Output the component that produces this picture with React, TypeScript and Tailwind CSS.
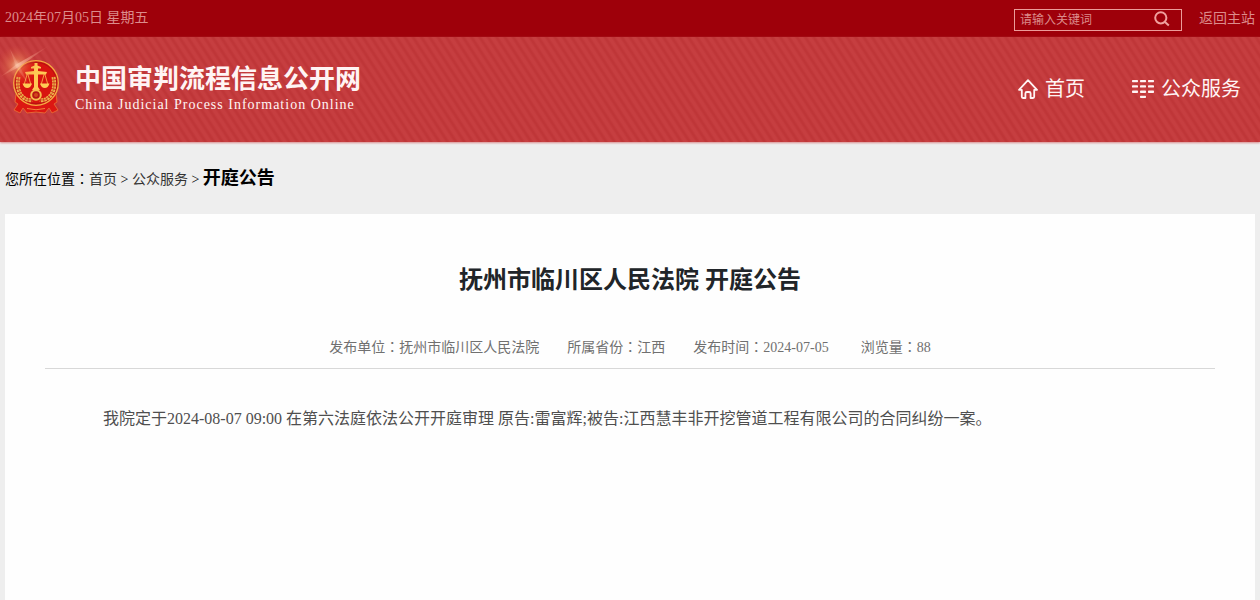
import type { ReactNode } from "react";

const metaItems = [
  { label: "发布单位", value: "抚州市临川区人民法院" },
  { label: "所属省份", value: "江西" },
  { label: "发布时间", value: "2024-07-05" },
  { label: "浏览量", value: "88" },
];

const CourtEmblem = () => (
  <svg viewBox="0 0 70 80" className="h-20 w-[70px] shrink-0" aria-hidden="true">
    <defs>
      <radialGradient id="flare">
        <stop offset="0" stopColor="#ffd9b0" stopOpacity="0.95" />
        <stop offset="0.3" stopColor="#f79a60" stopOpacity="0.6" />
        <stop offset="1" stopColor="#e0503c" stopOpacity="0" />
      </radialGradient>
      <linearGradient id="ray" x1="0" y1="1" x2="1" y2="0">
        <stop offset="0" stopColor="#ff9c80" stopOpacity="0.1" />
        <stop offset="0.4" stopColor="#ffd0b4" stopOpacity="0.6" />
        <stop offset="1" stopColor="#ff9c80" stopOpacity="0" />
      </linearGradient>
    </defs>
    <g transform="translate(0 2)">
      {/* ribbon */}
      <path
        d="M16 55 L15 63 L18 65 L14 71 L20 74 L23 69 L27 74 Q36 72 45 74 L49 69 L52 74 L58 71 L54 65 L57 63 L56 55 Z"
        fill="#dc1712"
        stroke="#ea6a32"
        strokeWidth="0.9"
      />
      <path d="M27 69.5 Q36 72 45 69.5" fill="none" stroke="#f4863b" strokeWidth="1" />
      {/* disc */}
      <circle cx="36" cy="44" r="22.3" fill="#cf1713" stroke="#f5ad43" strokeWidth="1.3" />
      <circle cx="36" cy="44" r="20.6" fill="#d8140f" stroke="#a91112" strokeWidth="0.7" />
      {/* wheat */}
      <path
        d="M18.5 38 Q16 52 23 58 Q27 62 32 61 M53.5 38 Q56 52 49 58 Q45 62 40 61"
        fill="none"
        stroke="#eeb14c"
        strokeWidth="4"
        strokeDasharray="2.4 0.7"
      />
      <path
        d="M18.5 38 Q16 52 23 58 Q27 62 32 61 M53.5 38 Q56 52 49 58 Q45 62 40 61"
        fill="none"
        stroke="#bd4b20"
        strokeWidth="0.7"
      />
      {/* ornamental column and scales */}
      <path
        d="M34.5 24 H37.5 V26.5 L41 28 V29.5 H38 V32 L47 33 L46 35.5 H38 V48 L40 51 H32 L34 48 V35.5 H26 L25 33 L34 32 V29.5 H31 V28 L34.5 26.5 Z"
        fill="#ffc954"
      />
      <path
        d="M27.5 34 L24 46 M27.5 34 L31 46 M44.5 34 L41 46 M44.5 34 L48 46"
        fill="none"
        stroke="#ffc04e"
        strokeWidth="0.8"
      />
      <path d="M22.5 44.5 H32 Q30.5 49 27.2 49 Q24 49 22.5 44.5 M40 44.5 H49.5 Q48 49 44.8 49 Q41.5 49 40 44.5" fill="#ffcb54" />
      <circle cx="36" cy="56" r="4.8" fill="#b81612" stroke="#f6bd4d" strokeWidth="2" />
      <circle cx="36" cy="56" r="2" fill="#d2481b" />
    </g>
    {/* light flare */}
    <circle cx="17" cy="28" r="20" fill="url(#flare)" opacity="0.8" />
    <path d="M0 40 L17 27 L50 8 L19 30 Z" fill="url(#ray)" />
    <path d="M10 12 L19 28 L29 48 L16 30 Z" fill="url(#ray)" opacity="0.4" />
  </svg>
);

const SearchIcon = () => (
  <svg viewBox="0 0 16 16" className="size-4" fill="none" stroke="#f0a09e" strokeWidth="2">
    <circle cx="6.8" cy="6.8" r="5.6" />
    <path d="M11 11 L14.8 14.5" />
  </svg>
);

const HomeIcon = () => (
  <svg
    viewBox="0 0 20 20"
    className="size-5"
    fill="none"
    stroke="currentColor"
    strokeWidth="1.8"
    strokeLinejoin="round"
    strokeLinecap="round"
    aria-hidden="true"
  >
    <path d="M3.8 10.8 H1 L10 1.2 L19 10.8 H16.2 V17.8 Q16.2 19 15 19 H12.6 V14.5 Q12.6 13 11.2 13 H8.8 Q7.4 13 7.4 14.5 V19 H5 Q3.8 19 3.8 17.8 Z" />
  </svg>
);

const ServiceIcon = () => (
  <svg viewBox="0 0 22 18" className="h-[18px] w-[22px]" fill="currentColor" aria-hidden="true">
    {[0, 5.3, 10.6].map((y) =>
      [0, 8, 16].map((x) => <rect key={`${x}-${y}`} x={x} y={y} width="6" height="2.3" rx="0.7" />),
    )}
    <rect x="8" y="15.7" width="6" height="2.3" rx="0.7" />
  </svg>
);

const Colon = () => <span className="font-['Noto_Sans_CJK_JP',sans-serif]">：</span>;

const NavLink = ({ icon, children }: { icon: ReactNode; children: ReactNode }) => (
  <a href="#" className="flex items-center gap-[7px] text-xl leading-7 text-[#fff4f4]">
    {icon}
    {children}
  </a>
);

const TopBar = () => (
  <div className="flex h-[37px] items-center justify-between bg-[#9e000a] px-[5px] text-sm text-[#dc8c8c]">
    <span className="pb-px">2024年07月05日 星期五</span>
    <div className="flex items-center gap-[17px]">
      <form
        className="mt-[3px] flex h-[22px] w-[168px] items-center border border-[#ec9c9a] pr-[11px] pl-[5px]"
        onSubmit={(event) => event.preventDefault()}
      >
        <input
          type="text"
          aria-label="请输入关键词"
          placeholder="请输入关键词"
          className="h-5 min-w-0 flex-1 text-xs text-[#f3a9a7] outline-none placeholder:text-[#dc8c8c]"
        />
        <button type="submit" aria-label="搜索" className="pb-[3px]">
          <SearchIcon />
        </button>
      </form>
      <a href="#">返回主站</a>
    </div>
  </div>
);

const Header = () => (
  <header className="flex h-[105px] items-start justify-between bg-[#c33a3c] bg-[repeating-linear-gradient(57deg,#c63e40_0px,#c63e40_2px,#bf3638_4px,#bf3638_5px,#c63e40_7px)] pr-[19px] shadow-[0_1px_2px_#d98a8b]">
    <div className="flex">
      <CourtEmblem />
      <div className="pt-[26px] pl-[5px] text-[#fff4f4]">
        <h1 className="text-[26px] leading-[34px] font-bold">中国审判流程信息公开网</h1>
        <p className="text-sm leading-4 tracking-[1px]">China Judicial Process Information Online</p>
      </div>
    </div>
    <nav className="flex gap-[47px] pt-[38px]">
      <NavLink icon={<HomeIcon />}>首页</NavLink>
      <NavLink icon={<ServiceIcon />}>公众服务</NavLink>
    </nav>
  </header>
);

export default function App() {
  return (
    <div className="flex min-h-screen flex-col bg-[#eeeeee] font-['Liberation_Serif','Noto_Sans_CJK_SC',serif]">
      <TopBar />
      <Header />
      <div className="flex flex-1 flex-col px-[5px]">
        <nav className="flex h-[72px] items-center pt-0.5 text-sm text-black">
          <p className="leading-7">
            您所在位置
            <Colon />
            <a href="#" className="text-[#333333]">首页</a>
            {" > "}
            <a href="#" className="text-[#333333]">公众服务</a>
            {" > "}
            <strong className="text-lg leading-7">开庭公告</strong>
          </p>
        </nav>
        <main className="flex-1 bg-[#fefefe] px-10 pt-12">
          <h2 className="text-center text-2xl leading-9 font-bold text-[#212529]">
            抚州市临川区人民法院 开庭公告
          </h2>
          <div className="mt-[38px] flex justify-center gap-7 border-b border-[#d8d8d8] pb-2.5 text-sm leading-5 text-[#707070] *:last:pl-1">
            {metaItems.map((item) => (
              <span key={item.label}>
                {item.label}
                <Colon />
                {item.value}
              </span>
            ))}
          </div>
          <p className="px-[58px] pt-[34px] text-base leading-8 text-[#4f4f4f]">
            我院定于2024-08-07 09:00 在第六法庭依法公开开庭审理 原告:雷富辉;被告:江西慧丰非开挖管道工程有限公司的合同纠纷一案。
          </p>
        </main>
      </div>
    </div>
  );
}
